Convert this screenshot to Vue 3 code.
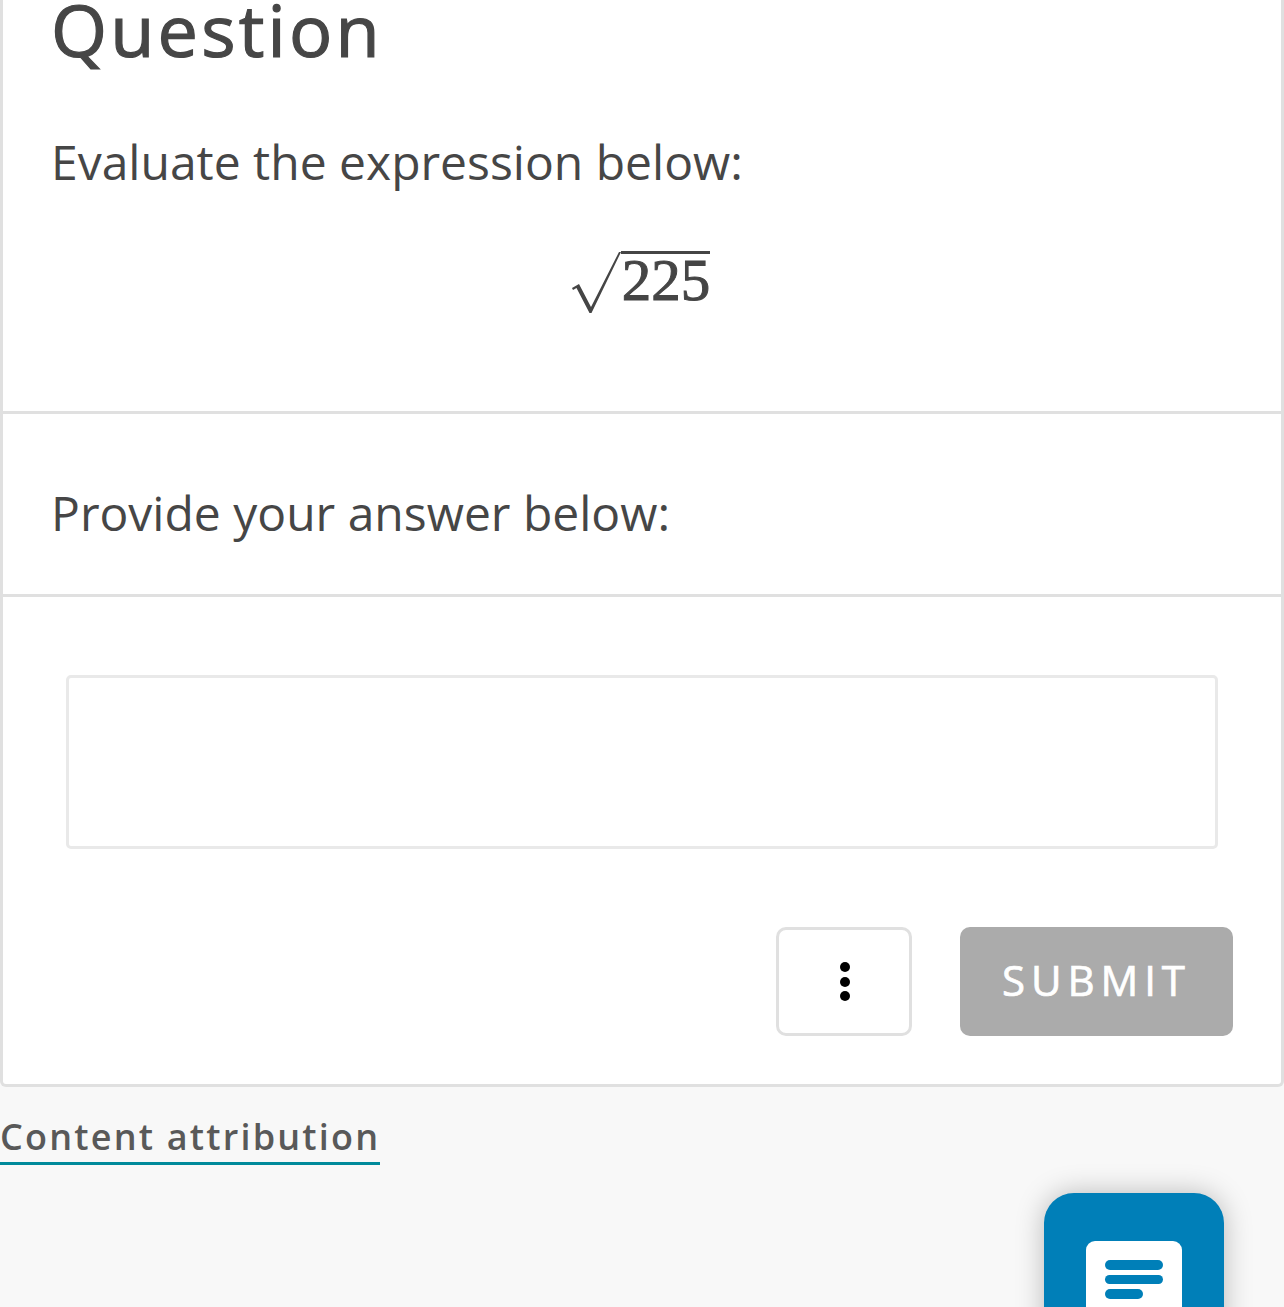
<script setup>
const title = 'Question'
</script>

<template>
  <div class="page">
    <section class="card">
      <div class="question">
        <h1 class="title">{{ title }}</h1>
        <p class="text">Evaluate the expression below:</p>
        <div class="math">
          <svg class="radical" width="52" height="66" viewBox="0 0 52 66" aria-hidden="true">
            <path d="M1 37 L8 33 L20 56 L48 1 L50 1 L20.5 62 L18.5 62 L5.5 37 L2 39 Z" fill="#454545" />
          </svg>
          <span class="radicand">225</span>
        </div>
      </div>
      <div class="prompt">
        <p class="text">Provide your answer below:</p>
      </div>
      <div class="answer">
        <div class="input"></div>
        <div class="actions">
          <button class="more" type="button" aria-label="More">
            <span class="dot"></span><span class="dot"></span><span class="dot"></span>
          </button>
          <button class="submit" type="button">SUBMIT</button>
        </div>
      </div>
    </section>
    <a class="attribution">Content attribution</a>
    <div class="fab">
      <div class="fab-icon">
        <span class="bar"></span><span class="bar"></span><span class="bar short"></span>
      </div>
    </div>
  </div>
</template>

<style scoped>
.page {
  position: relative;
  width: 1284px;
  height: 1307px;
  overflow: hidden;
  background: #f8f8f8;
  font-family: "Open Sans", "Noto Sans", sans-serif;
  color: #464646;
}
.card {
  box-sizing: border-box;
  height: 1087px;
  background: #fff;
  border: 3px solid #e0e0e0;
  border-top: 0;
  border-radius: 0 0 6px 6px;
  display: flex;
  flex-direction: column;
}
.question {
  box-sizing: border-box;
  height: 414px;
  padding: 0 48px 0 49px;
  border-bottom: 3px solid #e0e0e0;
  overflow: hidden;
}
.title {
  margin: 3px 0 0 -1px;
  font-size: 72px;
  line-height: 52px;
  font-weight: 400;
  letter-spacing: 3.2px;
  -webkit-text-stroke: 1.2px #464646;
}
.text {
  margin: 0;
  font-size: 48px;
  line-height: 66px;
  font-weight: 400;
}
.question .text {
  margin-left: -1px;
  margin-top: 74px;
}
.math {
  display: flex;
  justify-content: center;
  margin: 56px 0 0 -4px;
  height: 66px;
}
.radical {
  flex: none;
  margin-right: -2px;
}
.radicand {
  border-top: 3px solid #454545;
  height: 60px;
  padding: 0 0 0 1px;
  font-family: "Liberation Serif", "DejaVu Serif", serif;
  font-size: 59px;
  line-height: 52px;
  color: #454545;
  -webkit-text-stroke: 1px #454545;
}
.prompt {
  box-sizing: border-box;
  height: 183px;
  padding: 66px 48px 0;
  border-bottom: 3px solid #e0e0e0;
}
.answer {
  flex: 1;
  padding: 78px 48px 0 63px;
}
.input {
  box-sizing: border-box;
  width: 1152px;
  height: 174px;
  border: 3px solid #e9e9e9;
  border-radius: 5px;
}
.actions {
  display: flex;
  justify-content: flex-end;
  gap: 48px;
  margin-top: 78px;
}
.more {
  box-sizing: border-box;
  width: 136px;
  height: 109px;
  padding: 0;
  background: #fff;
  border: 3px solid #e0e0e0;
  border-radius: 10px;
  display: flex;
  flex-direction: column;
  align-items: center;
  justify-content: center;
  gap: 4.5px;
}
.dot {
  width: 10px;
  height: 10px;
  border-radius: 50%;
  background: #000;
  margin-left: 2px;
}
.submit {
  box-sizing: border-box;
  width: 273px;
  height: 109px;
  padding: 0 0 4px;
  border: 0;
  border-radius: 10px;
  background: #ababab;
  color: #fff;
  font-family: inherit;
  font-size: 42px;
  font-weight: 400;
  letter-spacing: 5.9px;
  -webkit-text-stroke: 0.7px #fff;
}
.attribution {
  display: inline-block;
  margin-top: 24px;
  height: 54px;
  box-sizing: border-box;
  width: 380px;
  border-bottom: 3px solid #008a9b;
  font-size: 36px;
  line-height: 52px;
  font-weight: 600;
  letter-spacing: 2.2px;
  color: #595959;
  white-space: nowrap;
}
.fab {
  position: absolute;
  left: 1044px;
  top: 1193px;
  width: 180px;
  height: 180px;
  border-radius: 30px;
  background: #007fb8;
  box-shadow: 0 0 28px rgba(0, 0, 0, 0.25);
  display: flex;
  justify-content: center;
}
.fab-icon {
  box-sizing: border-box;
  margin-top: 48px;
  width: 96px;
  height: 96px;
  padding: 19px;
  border-radius: 9px;
  background: #fff;
  display: flex;
  flex-direction: column;
  gap: 5px;
}
.bar {
  width: 58px;
  height: 9.5px;
  border-radius: 5px;
  background: #007fb8;
}
.bar.short {
  width: 38px;
}
</style>
